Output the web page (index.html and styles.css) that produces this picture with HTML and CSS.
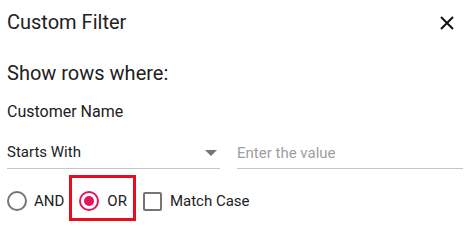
FILE: index.html
```html
<!DOCTYPE html>
<html lang="en">
<head>
  <meta charset="UTF-8" />
  <title>Custom Filter</title>
  <link rel="stylesheet" href="styles.css">
</head>
<body>
  <div class="dialog">
    <!-- Header -->
    <div class="dialog-header">
      <span class="dialog-title">Custom Filter</span>
      <button class="close-btn" aria-label="Close">
        <svg width="14" height="14" viewBox="0 0 14 14">
          <path d="M1 1 L13 13 M13 1 L1 13" stroke="#111" stroke-width="2" fill="none"/>
        </svg>
      </button>
    </div>

    <div class="subtitle">Show rows where:</div>
    <div class="field-label">Customer Name</div>

    <!-- Operator + value -->
    <div class="inputs">
      <div class="input select">
        <span>Starts With</span>
        <span class="caret"></span>
      </div>
      <div class="input">
        <input type="text" placeholder="Enter the value">
      </div>
    </div>

    <!-- Predicate row -->
    <div class="options">
      <label class="option">
        <span class="radio"></span>
        <span>AND</span>
      </label>
      <label class="option highlight">
        <span class="radio checked"></span>
        <span>OR</span>
      </label>
      <label class="option">
        <span class="checkbox"></span>
        <span>Match Case</span>
      </label>
    </div>
  </div>
</body>
</html>
```

FILE: styles.css
```css
* {
  box-sizing: border-box;
}

body {
  margin: 0;
  background: #ffffff;
  font-family: Roboto, "Liberation Sans", sans-serif;
  color: #212121;
}

.dialog {
  padding: 0 11px 0 7px;
}

.dialog-header {
  display: flex;
  justify-content: space-between;
  align-items: center;
  height: 44px;
}

.dialog-title {
  font-size: 20px;
  line-height: 44px;
}

.close-btn {
  border: none;
  background: none;
  padding: 0;
  margin: 2px 9px 0 0;
  width: 14px;
  height: 14px;
  display: flex;
}

.subtitle {
  margin-top: 15px;
  font-size: 20px;
  line-height: 28px;
}

.field-label {
  margin-top: 15px;
  font-size: 16px;
  line-height: 20px;
}

.inputs {
  display: grid;
  grid-template-columns: 213px 1fr;
  gap: 17px;
  margin-top: 15px;
}

.input {
  height: 32px;
  border-bottom: 1px solid #c6c6c6;
  display: flex;
  align-items: center;
  font-size: 15px;
  line-height: 31px;
}

.input input {
  border: none;
  outline: none;
  padding: 0;
  width: 100%;
  font-family: inherit;
  font-size: 15px;
  color: #212121;
  background: transparent;
}

.input input::placeholder {
  color: #9e9e9e;
}

.select {
  justify-content: space-between;
}

.caret {
  width: 0;
  height: 0;
  border-left: 6px solid transparent;
  border-right: 6px solid transparent;
  border-top: 6px solid #757575;
  margin-right: 3px;
}

.options {
  display: flex;
  align-items: center;
  gap: 7px;
  margin-top: 6px;
  font-size: 15px;
}

.option {
  display: flex;
  align-items: center;
  gap: 7px;
  margin-top: 6px;
}

.option.highlight {
  border: 3px solid #e60d1e;
  padding: 6px 6px 0 7px;
  height: 46px;
  gap: 8px;
  margin: 0 0 0 -2px;
}

.radio {
  width: 20px;
  height: 20px;
  border: 2px solid #757575;
  border-radius: 50%;
  display: flex;
  align-items: center;
  justify-content: center;
}

.radio.checked {
  border-color: #e3165b;
}

.radio.checked::after {
  content: "";
  width: 10px;
  height: 10px;
  border-radius: 50%;
  background: #e3165b;
}

.checkbox {
  width: 19px;
  height: 19px;
  border: 2px solid #757575;
  border-radius: 2px;
  margin-right: 1px;
}
```
